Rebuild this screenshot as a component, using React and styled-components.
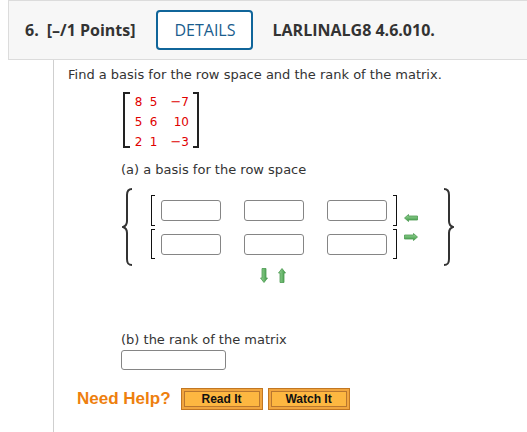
import styled, { createGlobalStyle } from "styled-components";

const GlobalStyle = createGlobalStyle`
  body {
    margin: 0;
    background: #fff;
  }
  * {
    box-sizing: border-box;
  }
`;

const Page = styled.div`
  padding-left: 8px;
`;

const Header = styled.div`
  display: flex;
  align-items: center;
  height: 60px;
  padding-left: 16px;
  background: #f7f7f7;
  border: 1px solid #dcdcdc;
  border-right: none;
  font-family: "Open Sans", sans-serif;
  font-weight: 700;
  font-size: 16px;
  color: #333;
`;

const QNum = styled.span`
  margin-right: 8px;
`;

const DetailsButton = styled.div`
  display: flex;
  align-items: center;
  justify-content: center;
  width: 97px;
  height: 40px;
  margin: 0 19px 0 21px;
  border: 2px solid #10659a;
  border-radius: 4px;
  background: #fff;
  color: #1a5d8e;
  font-weight: 400;
  font-size: 16px;
`;

const Body = styled.div`
  margin-left: 45px;
  min-height: 372px;
  border-left: 1px solid #cfcfcf;
  padding: 7px 0 0 14px;
  font-family: "DejaVu Sans", Verdana, sans-serif;
  font-size: 13px;
  color: #333;
`;

const Prompt = styled.div`
  line-height: 16px;
`;

const MatrixWrap = styled.div`
  display: flex;
  height: 56px;
  margin: 9px 0 0 55px;
`;

const Bracket = styled.div`
  width: ${({ $w }) => $w || 7}px;
  height: 100%;
  border: 2px solid #222;
  ${({ $side }) => ($side === "left" ? "border-right: none;" : "border-left: none;")}
`;

const MatrixGrid = styled.div`
  display: grid;
  grid-template-columns: 15px 15px 28px;
  grid-auto-rows: 20px;
  margin: 0 4px 0 1px;
  font-size: 12px;
  line-height: 20px;
  color: #e00000;
`;

const Cell = styled.span`
  text-align: ${({ $right }) => ($right ? "right" : "center")};
  white-space: nowrap;
`;

const Minus = styled.span`
  font-size: 13px;
`;

const PartLabel = styled.div`
  margin: ${({ $top }) => $top}px 0 0 53px;
  line-height: 16px;
`;

const SetRow = styled.div`
  display: flex;
  align-items: center;
  margin: 10px 0 0 54px;
`;

const VectorList = styled.div`
  display: flex;
  flex-direction: column;
  gap: 3px;
  margin-left: 18px;
`;

const VectorRow = styled.div`
  display: flex;
  align-items: center;
  height: ${({ $h }) => $h}px;
`;

const RowBracket = styled.div`
  width: 4px;
  height: 100%;
  margin-left: ${({ $ml }) => $ml || 0}px;
  border: 1.5px solid #111;
  ${({ $side }) => ($side === "left" ? "border-right: none;" : "border-left: none;")}
`;

const Entry = styled.input`
  display: block;
  width: ${({ $w }) => $w || 60}px;
  height: ${({ $h }) => $h || 21}px;
  margin-left: ${({ $ml }) => $ml || 0}px;
  margin-top: ${({ $mt }) => $mt || 0}px;
  padding: 0;
  border: 1px solid #858585;
  border-radius: 3px;
  background: #fff;
  outline: none;
`;

const ArrowColumn = styled.div`
  display: flex;
  flex-direction: column;
  gap: 11px;
  margin-left: 7px;
`;

const RightBrace = styled.div`
  margin-left: 25px;
  display: flex;
`;

const SwapArrows = styled.div`
  display: flex;
  gap: 10px;
  margin: 2px 0 0 192px;
`;

const HelpRow = styled.div`
  display: flex;
  align-items: center;
  margin: 19px 0 0 9px;
  font-family: "Liberation Sans", Arial, sans-serif;
`;

const NeedHelp = styled.span`
  margin-right: 11px;
  font-size: 17px;
  font-weight: 700;
  color: #ee7f0e;
`;

const HelpButton = styled.div`
  display: flex;
  align-items: center;
  justify-content: center;
  width: 80px;
  height: 20px;
  margin-right: 7px;
  border: 2px solid #f1a53e;
  box-shadow: 0 0 0 1px #c27722, inset 0 0 0 1px #b9772f;
  background: #fdb741;
  font-size: 12px;
  font-weight: 700;
  color: #111;
`;

const Brace = ({ flip }) => (
  <svg width="11" height="78" viewBox="0 0 11 78" style={flip ? { transform: "scaleX(-1)" } : undefined}>
    <path
      d="M10 1 C6 1 5 3 5 7 L5 33 C5 36 4 38 1 39 C4 40 5 42 5 45 L5 71 C5 75 6 77 10 77"
      fill="none"
      stroke="#333"
      strokeWidth="2"
    />
  </svg>
);

const ArrowH = ({ dir }) => (
  <svg width="14" height="8" viewBox="0 0 14 8" style={dir === "right" ? { transform: "scaleX(-1)" } : undefined}>
    <defs>
      <linearGradient id={`gh-${dir}`} x1="0" y1="0" x2="0" y2="1">
        <stop offset="0" stopColor="#9ad69a" />
        <stop offset="1" stopColor="#3f9a45" />
      </linearGradient>
    </defs>
    <polygon points="0.5,4 4.5,0.5 4.5,2 13.5,2 13.5,6 4.5,6 4.5,7.5" fill={`url(#gh-${dir})`} stroke="#4b9a50" strokeWidth="0.8" />
  </svg>
);

const ArrowV = ({ dir }) => (
  <svg width="8" height="15" viewBox="0 0 8 15" style={dir === "up" ? { transform: "scaleY(-1)" } : undefined}>
    <defs>
      <linearGradient id={`gv-${dir}`} x1="0" y1="0" x2="1" y2="0">
        <stop offset="0" stopColor="#9ad69a" />
        <stop offset="1" stopColor="#3f9a45" />
      </linearGradient>
    </defs>
    <polygon points="2,0.5 6,0.5 6,10 7.5,10 4,14.5 0.5,10 2,10" fill={`url(#gv-${dir})`} stroke="#4b9a50" strokeWidth="0.8" />
  </svg>
);

const matrix = [
  ["8", "5", "-7"],
  ["5", "6", "10"],
  ["2", "1", "-3"],
];

function Num({ value }) {
  if (value.startsWith("-")) {
    return (
      <>
        <Minus>−</Minus>
        {value.slice(1)}
      </>
    );
  }
  return value;
}

function VectorInputs({ h }) {
  return (
    <VectorRow $h={h}>
      <RowBracket $side="left" />
      <Entry $ml={6} />
      <Entry $ml={23} />
      <Entry $ml={23} />
      <RowBracket $side="right" $ml={6} />
    </VectorRow>
  );
}

export default function App() {
  return (
    <Page>
      <GlobalStyle />
      <Header>
        <QNum>6.</QNum>
        <span>[–/1 Points]</span>
        <DetailsButton>DETAILS</DetailsButton>
        <span>LARLINALG8 4.6.010.</span>
      </Header>
      <Body>
        <Prompt>Find a basis for the row space and the rank of the matrix.</Prompt>
        <MatrixWrap>
          <Bracket $side="left" />
          <MatrixGrid>
            {matrix.map((row, r) =>
              row.map((v, c) => (
                <Cell key={`${r}-${c}`} $right={c === 2}>
                  <Num value={v} />
                </Cell>
              ))
            )}
          </MatrixGrid>
          <Bracket $side="right" $w={6} />
        </MatrixWrap>
        <PartLabel $top={14}>(a) a basis for the row space</PartLabel>
        <SetRow>
          <Brace />
          <VectorList>
            <VectorInputs h={31} />
            <VectorInputs h={30} />
          </VectorList>
          <ArrowColumn>
            <ArrowH dir="left" />
            <ArrowH dir="right" />
          </ArrowColumn>
          <RightBrace>
            <Brace flip />
          </RightBrace>
        </SetRow>
        <SwapArrows>
          <ArrowV dir="down" />
          <ArrowV dir="up" />
        </SwapArrows>
        <PartLabel $top={49}>(b) the rank of the matrix</PartLabel>
        <Entry $w={105} $h={20} $ml={53} $mt={2} />
        <HelpRow>
          <NeedHelp>Need Help?</NeedHelp>
          <HelpButton>Read It</HelpButton>
          <HelpButton>Watch It</HelpButton>
        </HelpRow>
      </Body>
    </Page>
  );
}
